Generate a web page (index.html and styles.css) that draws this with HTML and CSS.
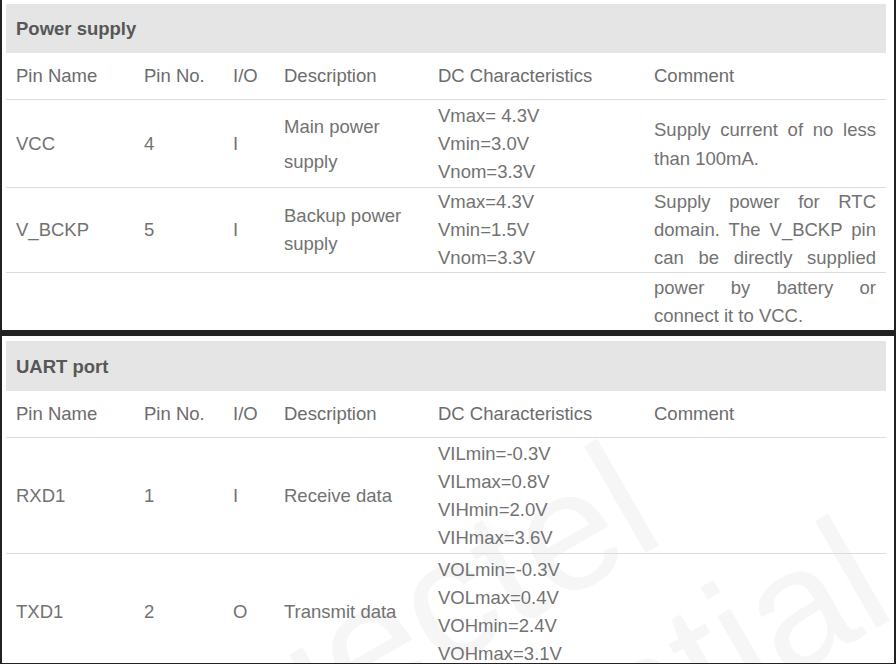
FILE: index.html
```html
<!DOCTYPE html>
<html lang="en">
<head>
<meta charset="utf-8">
<title>Pin definitions</title>
<link rel="stylesheet" href="styles.css">
</head>
<body>
<div class="sheet">
  <section class="page page-top">
    <div class="band">Power supply</div>
    <table class="pins">
      <colgroup>
        <col class="c-name"><col class="c-no"><col class="c-io"><col class="c-desc"><col class="c-dc"><col class="c-com">
      </colgroup>
      <thead>
        <tr><th>Pin Name</th><th>Pin No.</th><th>I/O</th><th>Description</th><th>DC Characteristics</th><th>Comment</th></tr>
      </thead>
      <tbody>
        <tr class="row-3">
          <td>VCC</td><td>4</td><td>I</td>
          <td class="loose">Main power supply</td>
          <td>Vmax= 4.3V<br>Vmin=3.0V<br>Vnom=3.3V</td>
          <td class="just">Supply current of no less than 100mA.</td>
        </tr>
        <tr class="row-3b">
          <td>V_BCKP</td><td>5</td><td>I</td>
          <td>Backup power supply</td>
          <td>Vmax=4.3V<br>Vmin=1.5V<br>Vnom=3.3V</td>
          <td class="just full">Supply power for RTC domain. The V_BCKP pin can be directly supplied</td>
        </tr>
        <tr class="row-cont">
          <td></td><td></td><td></td><td></td><td></td>
          <td class="just">power by battery or connect it to VCC.</td>
        </tr>
      </tbody>
    </table>
  </section>
  <section class="page page-bottom">
    <div class="watermark wm-1">Quectel</div>
    <div class="watermark wm-2">Confidential</div>
    <div class="band">UART port</div>
    <table class="pins">
      <colgroup>
        <col class="c-name"><col class="c-no"><col class="c-io"><col class="c-desc"><col class="c-dc"><col class="c-com">
      </colgroup>
      <thead>
        <tr><th>Pin Name</th><th>Pin No.</th><th>I/O</th><th>Description</th><th>DC Characteristics</th><th>Comment</th></tr>
      </thead>
      <tbody>
        <tr class="row-4">
          <td>RXD1</td><td>1</td><td>I</td><td>Receive data</td>
          <td>VILmin=-0.3V<br>VILmax=0.8V<br>VIHmin=2.0V<br>VIHmax=3.6V</td>
          <td></td>
        </tr>
        <tr class="row-4">
          <td>TXD1</td><td>2</td><td>O</td><td>Transmit data</td>
          <td>VOLmin=-0.3V<br>VOLmax=0.4V<br>VOHmin=2.4V<br>VOHmax=3.1V</td>
          <td></td>
        </tr>
      </tbody>
    </table>
  </section>
</div>
</body>
</html>
```

FILE: styles.css
```css
html, body {
  margin: 0;
  padding: 0;
  background: #222222;
}

.sheet {
  width: 896px;
  height: 664px;
  display: flex;
  flex-direction: column;
  gap: 6px;
  padding: 0 2px 1px 2px;
  box-sizing: border-box;
  font-family: "Liberation Sans", Arial, sans-serif;
  font-size: 18.5px;
  color: #727272;
}

.page {
  background: #ffffff;
  overflow: hidden;
  position: relative;
  padding: 0 8px 0 4px;
}

.page-top {
  height: 330px;
  padding-top: 4px;
  box-sizing: border-box;
}

.page-bottom {
  flex: 1;
  padding-top: 5px;
}

.band {
  background: #e5e5e5;
  height: 49px;
  line-height: 49px;
  padding-left: 10px;
  font-weight: bold;
  color: #575757;
  position: relative;
  z-index: 1;
}

.page-bottom .band {
  height: 50px;
  line-height: 51px;
}

.pins {
  width: 880px;
  table-layout: fixed;
  border-collapse: collapse;
  position: relative;
  z-index: 1;
}

.c-name { width: 128px; }
.c-no { width: 89px; }
.c-io { width: 51px; }
.c-desc { width: 154px; }
.c-dc { width: 216px; }
.c-com { width: 242px; }

.pins th {
  font-weight: normal;
  text-align: left;
  height: 46px;
  padding: 0 10px;
  vertical-align: middle;
  border-bottom: 1px solid #dcdcdc;
  color: #6c6c6c;
}

.pins td {
  padding: 2px 10px 1px;
  line-height: 28px;
  vertical-align: middle;
  border-bottom: 1px solid #dcdcdc;
}

.row-3 td { height: 84px; }
.row-3b td {
  height: 84px;
  padding-top: 0;
  padding-bottom: 0;
}
.row-4 td { height: 112px; }

.row-3 .loose { line-height: 35px; }

.just { text-align: justify; }

.row-3 .just { line-height: 29px; }

.full { text-align-last: justify; }

.row-cont td {
  border-bottom: none;
  height: 56px;
  vertical-align: top;
  padding-top: 1px;
}

.watermark {
  position: absolute;
  left: 0;
  top: 0;
  font-size: 170px;
  line-height: 1;
  white-space: nowrap;
  color: #f6f6f6;
  transform-origin: 0 0;
  transform: rotate(-30deg);
  pointer-events: none;
  z-index: 0;
}

.wm-1 { left: 87px; top: 372px; }
.wm-2 { left: 48px; top: 603px; }
```
